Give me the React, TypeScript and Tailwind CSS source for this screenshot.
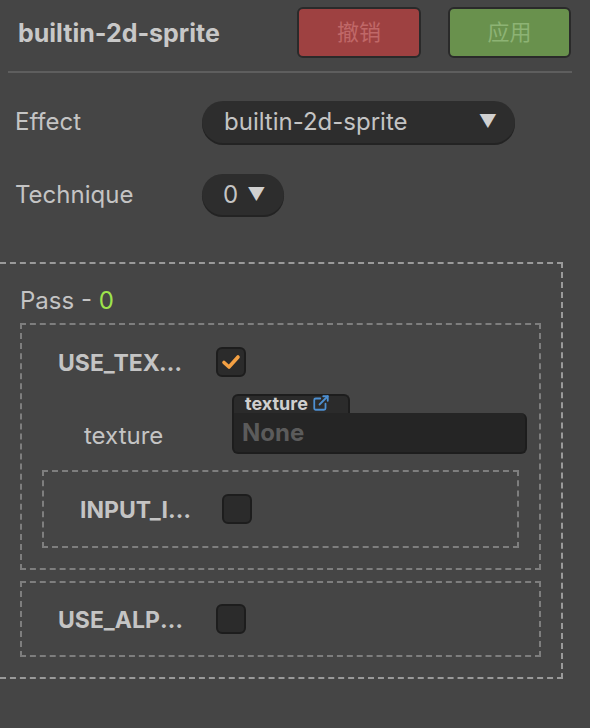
import { ExternalLink } from 'lucide-react'

const font = { fontFamily: 'Inter, "Noto Sans CJK SC", sans-serif' }

function Check({ on }: { on?: boolean }) {
  return (
    <div className="grid h-[30px] w-[30px] shrink-0 place-items-center rounded-[6px] border-2 border-[#1d1d1d] bg-[#2b2b2b]">
      {on ? (
        <svg width="20" height="16" viewBox="0 0 20 16">
          <path d="M3 8.5 L8 13 L17 3" fill="none" stroke="#f3a043" strokeWidth="3.6" strokeLinecap="round" strokeLinejoin="round" />
        </svg>
      ) : null}
    </div>
  )
}

function Toggle({ label, on, labelW }: { label: string; on?: boolean; labelW: string }) {
  return (
    <div className="flex h-[30px] items-center">
      <div className={`${labelW} truncate pt-[2px] text-[23px] leading-[30px] font-bold text-[#c4c4c4]`}>{label}</div>
      <Check on={on} />
    </div>
  )
}

export default function App() {
  return (
    <div className="h-[728px] w-[590px] overflow-hidden bg-[#454545] text-[#c4c4c4]" style={font}>
      {/* header */}
      <div className="flex h-[64px] items-center pl-[18px] pr-[19px] pt-[1px]">
        <div className="text-[25px] leading-[30px] font-bold text-[#c8c8c8]">builtin-2d-sprite</div>
        <div className="ml-auto flex gap-[27px]">
          <button className="h-[51px] w-[124px] rounded-[6px] border-2 border-[#2a2a2a] bg-[#9e4141] text-[22px] text-[#c06868]">
            撤销
          </button>
          <button className="h-[51px] w-[123px] rounded-[6px] border-2 border-[#2a2a2a] bg-[#69914d] text-[22px] text-[#8db374]">
            应用
          </button>
        </div>
      </div>
      <div className="ml-[8px] mr-[18px] mt-[7px] h-[2px] bg-[#5e5e5e]" />

      {/* effect / technique */}
      <div className="flex items-center pl-[15px] pt-[28px]">
        <div className="w-[187px] text-[24px] leading-[30px]">Effect</div>
        <div className="flex h-[42px] w-[313px] items-center rounded-full bg-[#2d2d2d] pl-[22px] pr-[18px] text-[24px] leading-[30px] shadow-[0_2px_0_#232323]">
          builtin-2d-sprite
          <span className="ml-auto text-[18px] text-[#d0d0d0]">▼</span>
        </div>
      </div>
      <div className="flex items-center pl-[15px] pt-[31px]">
        <div className="w-[187px] text-[24px] leading-[30px]">Technique</div>
        <div className="flex h-[41px] w-[82px] items-center gap-[9px] rounded-full bg-[#2d2d2d] pl-[21px] text-[24px] leading-[30px] shadow-[0_2px_0_#232323]">
          0<span className="text-[18px] text-[#d0d0d0]">▼</span>
        </div>
      </div>

      {/* pass */}
      <div className="mt-[47px] w-[563px] border-2 border-l-0 border-dashed border-[#9a9a9a] pb-[20px] pl-[20px] pr-[20px] pt-[23px]">
        <div className="text-[24px] leading-[28px]">
          Pass - <span className="text-[#9ee44c]">0</span>
        </div>
        <div className="mt-[8px] border-2 border-dashed border-[#7e7e7e] pb-[20px] pl-[36px] pr-[10px] pt-[22px]">
          <Toggle label="USE_TEXTURE" on labelW="w-[158px] pr-[28px]" />
          <div className="mt-[17px] flex items-end">
            <div className="w-[174px] pb-[3px] pl-[26px] text-[24px] leading-[30px]">texture</div>
            <div className="flex w-[295px] flex-col">
              <div className="flex h-[19px] w-[118px] items-end gap-[4px] rounded-t-[6px] border-2 border-b-0 border-[#1d1d1d] bg-[#2b2b2b] pl-[11px] text-[18px] leading-[18px] font-bold text-[#cfcfcf]">
                texture
                <ExternalLink className="mb-[1px] h-[18px] w-[18px] text-[#4d8fd1]" strokeWidth={2.4} />
              </div>
              <div className="flex h-[41px] items-center rounded-b-[6px] rounded-tr-[6px] border-2 border-t-0 border-[#1d1d1d] bg-[#252525] pl-[8px] text-[24px] leading-[30px] font-bold text-[#5b5b5b]">
                None
              </div>
            </div>
          </div>
          <div className="-ml-[16px] mr-[10px] mt-[16px] border-2 border-dashed border-[#7e7e7e] py-[22px] pl-[36px]">
            <Toggle label="INPUT_IS_GRAY" labelW="w-[142px] pr-[24px]" />
          </div>
        </div>
        <div className="mt-[11px] border-2 border-dashed border-[#7e7e7e] py-[21px] pl-[36px]">
          <Toggle label="USE_ALPHA_TEST" labelW="w-[158px] pr-[28px]" />
        </div>
      </div>
    </div>
  )
}
